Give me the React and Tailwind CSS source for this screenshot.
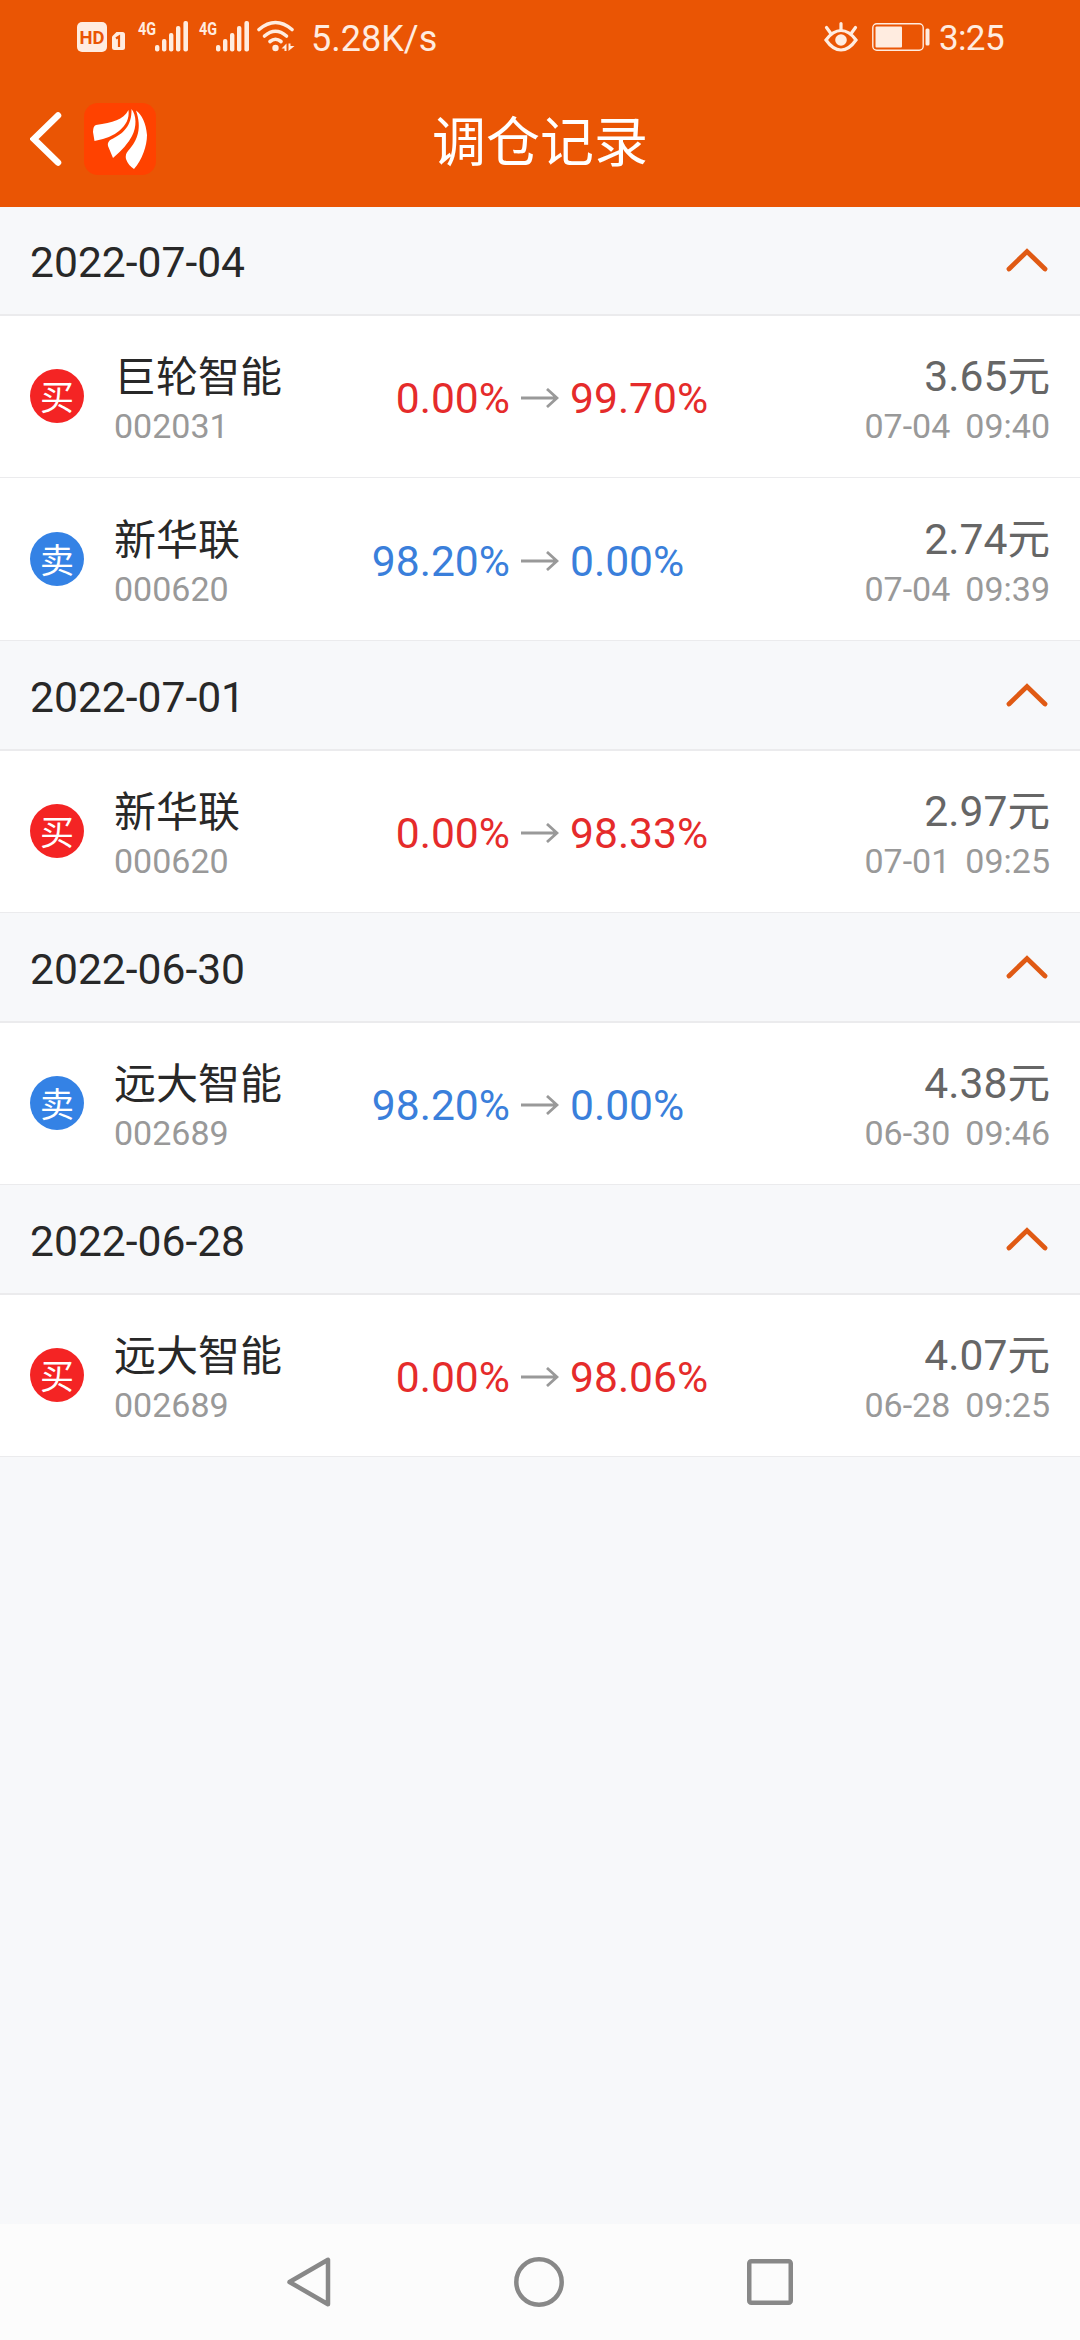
const groups = [
  {
    date: "2022-07-04",
    records: [
      { type: "buy", name: "巨轮智能", code: "002031", from: "0.00%", to: "99.70%", price: "3.65元", day: "07-04", time: "09:40" },
      { type: "sell", name: "新华联", code: "000620", from: "98.20%", to: "0.00%", price: "2.74元", day: "07-04", time: "09:39" },
    ],
  },
  {
    date: "2022-07-01",
    records: [
      { type: "buy", name: "新华联", code: "000620", from: "0.00%", to: "98.33%", price: "2.97元", day: "07-01", time: "09:25" },
    ],
  },
  {
    date: "2022-06-30",
    records: [
      { type: "sell", name: "远大智能", code: "002689", from: "98.20%", to: "0.00%", price: "4.38元", day: "06-30", time: "09:46" },
    ],
  },
  {
    date: "2022-06-28",
    records: [
      { type: "buy", name: "远大智能", code: "002689", from: "0.00%", to: "98.06%", price: "4.07元", day: "06-28", time: "09:25" },
    ],
  },
];

function Signal() {
  return (
    <svg className="mb-[2px] overflow-visible" width="51" height="32" viewBox="0 0 51 32" fill="currentColor">
      <text x="0" y="14.500" fontSize="19" fontWeight="700" textLength="18" lengthAdjust="spacingAndGlyphs">4G</text>
      <rect x="17" y="25" width="4.400" height="6.500" rx="2" />
      <rect x="24" y="19" width="4.400" height="12.500" rx="2" />
      <rect x="31" y="13" width="4.400" height="18.500" rx="2" />
      <rect x="38" y="6" width="4.400" height="25.500" rx="2" />
      <rect x="45.400" y="1" width="4.600" height="30.500" rx="2" />
    </svg>
  );
}

function StatusBar() {
  return (
    <div className="flex h-[74px] items-center pl-[77px] pr-[76px] text-[#ffece0]">
      <svg width="30" height="30" viewBox="0 0 30 30">
        <rect width="30" height="30" rx="5" fill="currentColor" />
        <text x="2.500" y="21.500" fontSize="18" fontWeight="700" textLength="25" lengthAdjust="spacingAndGlyphs" fill="#ea5504">HD</text>
      </svg>
      <svg className="ml-[5px] mt-[8px]" width="13" height="18" viewBox="0 0 13 18">
        <path d="M4.500 0H10.500Q13 0 13 2.500V15.500Q13 18 10.500 18H2.500Q0 18 0 15.500V4.500Z" fill="currentColor" />
        <path d="M4 6.500 7 4.500V15" fill="none" stroke="#ea5504" strokeWidth="2.200" />
      </svg>
      <span className="ml-[13px]"><Signal /></span>
      <span className="ml-[10px]"><Signal /></span>
      <svg className="mb-[2px] ml-[7px]" width="38" height="32" viewBox="0 0 38 32" fill="none" stroke="currentColor" strokeWidth="3.600" strokeLinecap="round">
        <path d="M2 9.500Q18.500-4.500 35 9.500" />
        <path d="M7.500 16Q18.500 6.500 29.500 16" />
        <path d="M13 21.500Q18.500 17 24 21.500" />
        <circle cx="18.500" cy="28" r="3.200" fill="currentColor" stroke="none" />
        <path d="M29.500 23.500V31H27.500V28.500H24.500ZM31.500 31V23.500H33.500V26H37.500Z" fill="currentColor" stroke="none" />
      </svg>
      <span className="ml-[16px] pt-[3px] text-[36px] leading-none">5.28K/s</span>
      <svg className="ml-auto mb-px" width="34" height="32" viewBox="0 0 34 32" fill="none" stroke="currentColor" strokeWidth="3.200" strokeLinecap="round">
        <path d="M2 19Q9 9.500 17 9.500T32 19Q25 29 17 29T2 19Z" />
        <circle cx="17" cy="19" r="5.800" fill="currentColor" stroke="none" />
        <path d="M17 9V2.500M6.500 12 2.500 6.500M27.500 12 31.500 6.500" />
      </svg>
      <svg className="ml-[14px]" width="58" height="28" viewBox="0 0 58 28">
        <rect x="0.800" y="0.800" width="50.400" height="26.400" rx="4" fill="none" stroke="currentColor" strokeWidth="1.400" />
        <rect x="3.500" y="3.500" width="26.500" height="21" rx="1" fill="currentColor" />
        <rect x="53.500" y="5.500" width="4" height="17" rx="1.500" fill="currentColor" />
      </svg>
      <span className="ml-[9px] pt-[3px] text-[35px] leading-none tracking-[-0.6px]">3:25</span>
    </div>
  );
}

function Header() {
  return (
    <header className="relative z-10 h-[207px] bg-[#ea5504] text-white">
      <StatusBar />
      <div className="grid h-[133px] grid-cols-[1fr_auto_1fr] items-center px-[30px]">
        <div className="flex items-center pb-[3px]">
          <svg width="32" height="54" viewBox="0 0 32 54" fill="none" stroke="currentColor" strokeWidth="6.500" strokeLinecap="round">
            <path d="M28 3.500 4 27 28 50.500" />
          </svg>
          <svg className="ml-[22px]" width="72" height="72" viewBox="0 0 72 72" fill="#fff">
            <rect width="72" height="72" rx="14" fill="#ff4200" />
            <path d="M44.500 7C39 17 29 19.500 12 22Q9 23 9 29L10.500 38Q27 35 35 28C42 22 45.500 16 44.500 7Z" />
            <path d="M47.500 6C48 23 39 31 27 36.500Q23 39 24 43L29 55Q43 43 48 33C53 24 52.500 12 47.500 6Z" />
            <path d="M52 7.500C58 25 54 37 44 48Q41 51 42 56Q44 62 50 66C58 57 63 43 63 32C62 20 58 12 52 7.500Z" />
          </svg>
        </div>
        <h1 className="pt-[7px] text-[54px] leading-none">调仓记录</h1>
      </div>
    </header>
  );
}

function Record({ record, first }) {
  const buy = record.type === "buy";
  const color = buy ? "text-[#e52b2b]" : "text-[#3a7fdb]";
  return (
    <li className={`flex h-[163px] items-center border-[#ebebed] bg-white px-[30px] ${first ? "border-t-2 pb-px" : "border-t"}`}>
      <span className={`flex size-[54px] items-center justify-center rounded-full pt-[3px] text-[34px] leading-none text-white ${buy ? "bg-[#f42424]" : "bg-[#3482e5]"}`}>
        {buy ? "买" : "卖"}
      </span>
      <div className="ml-[30px] w-[200px] pt-1.5">
        <div className="text-[42px] leading-[55px] text-[#282828]">{record.name}</div>
        <div className="text-[34px] leading-[43px] text-[#999999]">{record.code}</div>
      </div>
      <div className={`flex flex-1 items-center pt-1 text-[42.6px] leading-none ${color}`}>
        <span className="w-[196px] text-right">{record.from}</span>
        <svg className="ml-[11px]" width="38" height="20" viewBox="0 0 38 20" fill="none" stroke="#999" strokeWidth="2.800">
          <path d="M0 10H36M26 1 36 10 26 19" />
        </svg>
        <span className="ml-[11px]">{record.to}</span>
      </div>
      <div className="pt-[3px] text-right">
        <div className="text-[42.6px] leading-[56px] text-[#666666]">{record.price}</div>
        <div className="flex justify-end gap-[15px] text-[34px] leading-[44px] text-[#999999]">
          <span>{record.day}</span>
          <span>{record.time}</span>
        </div>
      </div>
    </li>
  );
}

function Group({ group }) {
  return (
    <section>
      <div className="flex h-[109px] items-center justify-between border-t border-[#ebebed] px-[30px] text-[#282828]">
        <h2 className="pt-1 text-[42.6px] leading-none">{group.date}</h2>
        <svg className="mr-[2px]" width="42" height="24" viewBox="0 0 42 24" fill="none" stroke="#e05a14" strokeWidth="4.800" strokeLinecap="round">
          <path d="M3 21 21 3.500 39 21" />
        </svg>
      </div>
      <ul>
        {group.records.map((record, i) => (
          <Record key={record.code + record.time} record={record} first={i === 0} />
        ))}
      </ul>
    </section>
  );
}

export default function App() {
  return (
    <div className="flex h-[2340px] w-[1080px] flex-col bg-[#f7f8fa] font-[Roboto,'Noto_Sans_CJK_SC',sans-serif]">
      <Header />
      <main className="-mt-[2px] flex-1">
        {groups.map((group) => (
          <Group key={group.date} group={group} />
        ))}
        <div className="border-t border-[#ebebed]" />
      </main>
      <nav className="flex h-[116px] items-center justify-between bg-[#fcfcfc] pl-[286px] pr-[287px]">
        <svg width="45" height="50" viewBox="0 0 45 50" fill="none" stroke="#888" strokeWidth="4.500" strokeLinejoin="round">
          <path d="M42 2.800V47.200L3.500 25Z" />
        </svg>
        <svg width="50" height="50" viewBox="0 0 50 50" fill="none" stroke="#888" strokeWidth="4.500">
          <circle cx="25" cy="25" r="22.700" />
        </svg>
        <svg width="46" height="46" viewBox="0 0 46 46" fill="none" stroke="#888" strokeWidth="4.500">
          <rect x="2.250" y="2.250" width="41.500" height="41.500" rx="2" />
        </svg>
      </nav>
    </div>
  );
}
